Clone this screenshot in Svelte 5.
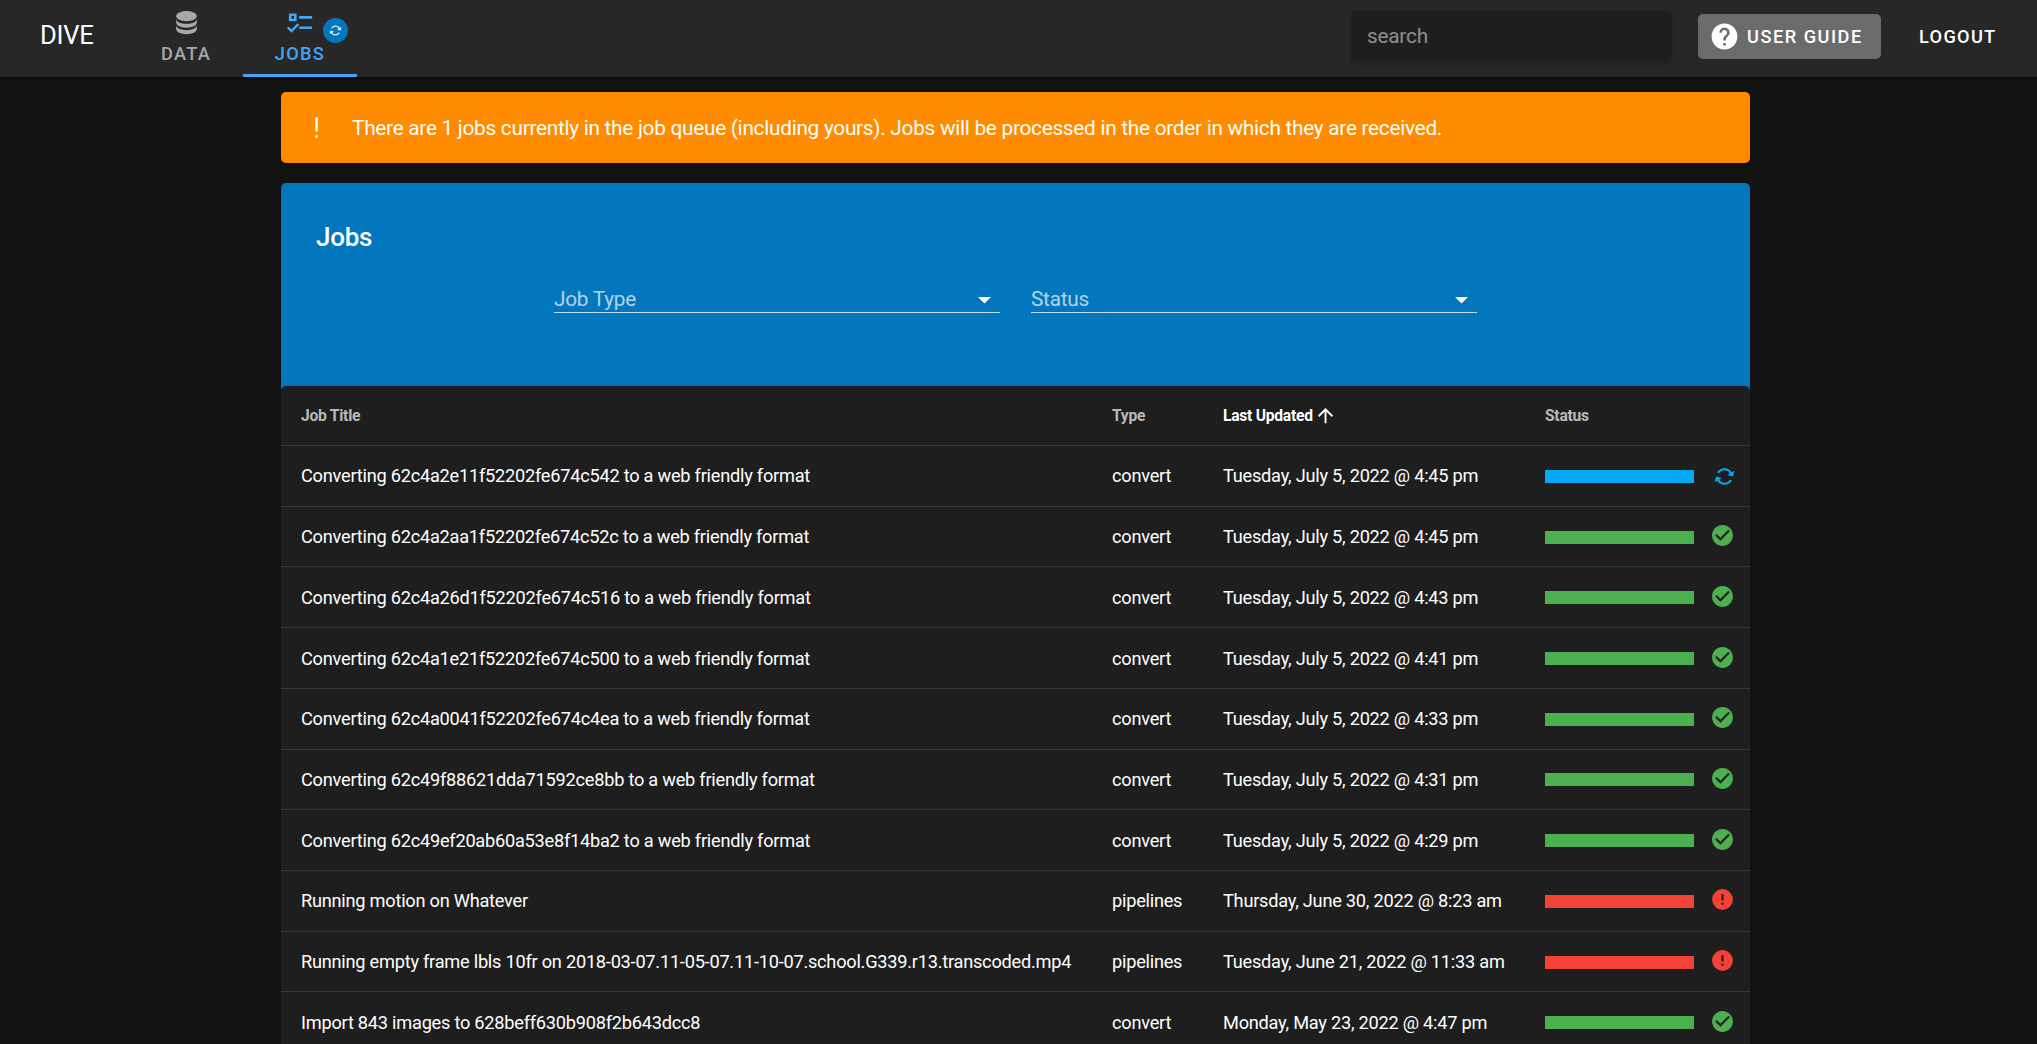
<script>
  const icons = {
    database: 'M12,3C7.58,3 4,4.79 4,7C4,9.21 7.58,11 12,11C16.42,11 20,9.21 20,7C20,4.79 16.42,3 12,3M4,9V12C4,14.21 7.58,16 12,16C16.42,16 20,14.21 20,12V9C20,11.21 16.42,13 12,13C7.58,13 4,11.21 4,9M4,14V17C4,19.21 7.58,21 12,21C16.42,21 20,19.21 20,17V14C20,16.21 16.42,18 12,18C7.58,18 4,16.21 4,14Z',
    checks: 'M3,5H9V11H3V5M5,7V9H7V7H5M11,7H21V9H11V7M11,15H21V17H11V15M5,20L1.5,16.5L2.91,15.09L5,17.17L9.59,12.59L11,14L5,20Z',
    renew: 'M12,6V9L16,5L12,1V4A8,8 0 0,0 4,12C4,13.57 4.46,15.03 5.24,16.26L6.7,14.8C6.25,13.97 6,13 6,12A6,6 0 0,1 12,6M18.76,7.74L17.3,9.2C17.74,10.04 18,11 18,12A6,6 0 0,1 12,18V15L8,19L12,23V20A8,8 0 0,0 20,12C20,10.43 19.54,8.97 18.76,7.74Z',
    done: 'M12 2C6.5 2 2 6.5 2 12S6.5 22 12 22 22 17.5 22 12 17.5 2 12 2M10 17L5 12L6.41 10.59L10 14.17L17.59 6.58L19 8L10 17Z',
    error: 'M13,13H11V7H13M13,17H11V15H13M12,2A10,10 0 0,0 2,12A10,10 0 0,0 12,22A10,10 0 0,0 22,12A10,10 0 0,0 12,2Z',
    help: 'M15.07,11.25L14.17,12.17C13.45,12.89 13,13.5 13,15H11V14.5C11,13.39 11.45,12.39 12.17,11.67L13.41,10.41C13.78,10.05 14,9.55 14,9C14,7.89 13.1,7 12,7A2,2 0 0,0 10,9H8A4,4 0 0,1 12,5A4,4 0 0,1 16,9C16,9.88 15.64,10.67 15.07,11.25M13,19H11V17H13M12,2A10,10 0 0,0 2,12C2,17.53 6.47,22 12,22C17.53,22 22,17.53 22,12C22,6.47 17.5,2 12,2Z',
    bang: 'M11,4L13,4L13,15L11,15L11,4ZM13,18L13,20L11,20L11,18L13,18Z',
    up: 'M13,20H11V8L5.5,13.5L4.08,12.08L12,4.16L19.92,12.08L18.5,13.5L13,8V20Z',
    down: 'M7,10L12,15L17,10H7Z'
  };
  const rows = [
    ['Converting 62c4a2e11f52202fe674c542 to a web friendly format', 'convert', 'Tuesday, July 5, 2022 @ 4:45 pm', 'running'],
    ['Converting 62c4a2aa1f52202fe674c52c to a web friendly format', 'convert', 'Tuesday, July 5, 2022 @ 4:45 pm', 'done'],
    ['Converting 62c4a26d1f52202fe674c516 to a web friendly format', 'convert', 'Tuesday, July 5, 2022 @ 4:43 pm', 'done'],
    ['Converting 62c4a1e21f52202fe674c500 to a web friendly format', 'convert', 'Tuesday, July 5, 2022 @ 4:41 pm', 'done'],
    ['Converting 62c4a0041f52202fe674c4ea to a web friendly format', 'convert', 'Tuesday, July 5, 2022 @ 4:33 pm', 'done'],
    ['Converting 62c49f88621dda71592ce8bb to a web friendly format', 'convert', 'Tuesday, July 5, 2022 @ 4:31 pm', 'done'],
    ['Converting 62c49ef20ab60a53e8f14ba2 to a web friendly format', 'convert', 'Tuesday, July 5, 2022 @ 4:29 pm', 'done'],
    ['Running motion on Whatever', 'pipelines', 'Thursday, June 30, 2022 @ 8:23 am', 'error'],
    ['Running empty frame lbls 10fr on 2018-03-07.11-05-07.11-10-07.school.G339.r13.transcoded.mp4', 'pipelines', 'Tuesday, June 21, 2022 @ 11:33 am', 'error'],
    ['Import 843 images to 628beff630b908f2b643dcc8', 'convert', 'Monday, May 23, 2022 @ 4:47 pm', 'done']
  ];
  const statusIcon = { running: icons.renew, done: icons.done, error: icons.error };
</script>

<header class="bar">
  <div class="title">DIVE</div>
  <nav class="tabs">
    <div class="tab">
      <svg class="tab-icon" viewBox="0 0 24 24"><path d={icons.database} /></svg>
      <span>DATA</span>
    </div>
    <div class="tab active">
      <svg class="tab-icon" viewBox="0 0 24 24"><path d={icons.checks} /></svg>
      <span>JOBS</span>
      <div class="badge"><svg viewBox="0 0 24 24"><path d={icons.renew} /></svg></div>
    </div>
  </nav>
  <div class="search">search</div>
  <div class="guide">
    <svg viewBox="0 0 24 24"><path d={icons.help} /></svg>
    <span>USER GUIDE</span>
  </div>
  <div class="logout">LOGOUT</div>
</header>

<main class="page">
  <div class="alert">
    <svg viewBox="0 0 24 24"><path d={icons.bang} /></svg>
    <span>There are 1 jobs currently in the job queue (including yours). Jobs will be processed in the order in which they are received.</span>
  </div>

  <section class="card">
    <h2>Jobs</h2>
    <div class="filters">
      <div class="select">
        <span>Job Type</span>
        <svg viewBox="0 0 24 24"><path d={icons.down} /></svg>
      </div>
      <div class="select">
        <span>Status</span>
        <svg viewBox="0 0 24 24"><path d={icons.down} /></svg>
      </div>
    </div>

    <div class="table">
      <div class="row head">
        <div>Job Title</div>
        <div>Type</div>
        <div class="sorted">Last Updated <svg viewBox="0 0 24 24"><path d={icons.up} /></svg></div>
        <div>Status</div>
      </div>
      {#each rows as r}
        <div class="row">
          <div>{r[0]}</div>
          <div>{r[1]}</div>
          <div>{r[2]}</div>
          <div class="status {r[3]}">
            <div class="progress"></div>
            <svg viewBox="0 0 24 24"><path d={statusIcon[r[3]]} /></svg>
          </div>
        </div>
      {/each}
    </div>
  </section>
</main>

<style>
  :global(body) {
    margin: 0;
    background: #121212;
    color: #fff;
    font-family: Roboto, sans-serif;
    letter-spacing: -0.015em;
    overflow: hidden;
    height: 1044px;
  }
  svg { display: block; fill: currentColor; flex: none; }

  .bar {
    height: 77px;
    background: #272727;
    display: flex;
    align-items: center;
    padding: 0 40.5px 4px 40px;
    box-sizing: border-box;
    position: relative;
    box-shadow: 0 2px 5px rgba(0,0,0,.3);
  }
  .title { font-size: 25.6px; width: 89px; margin-bottom: 3px; }
  .tabs { display: flex; height: 77px; margin-right: auto; align-self: flex-start; }
  .tab {
    width: 114px;
    height: 77px;
    box-sizing: border-box;
    padding-top: 7px;
    display: flex;
    flex-direction: column;
    align-items: center;
    position: relative;
    color: rgba(255,255,255,.6);
    font-size: 18.2px;
    font-weight: 500;
    letter-spacing: 1.3px;
    line-height: 22px;
  }
  .tab-icon { width: 31px; height: 31px; margin-bottom: 5px; }
  .tab.active { color: #42a5f5; border-bottom: 3px solid #42a5f5; }
  .badge {
    position: absolute;
    left: 80px;
    top: 18px;
    width: 25px;
    height: 25px;
    border-radius: 50%;
    background: #0277bd;
    color: #fff;
    display: flex;
    align-items: center;
    justify-content: center;
  }
  .badge svg { width: 15px; height: 15px; transform: rotate(60deg); }

  .search {
    width: 321px;
    height: 51px;
    box-sizing: border-box;
    padding-left: 16px;
    line-height: 50px;
    background: #1e1e1e;
    border-radius: 5px;
    color: rgba(255,255,255,.5);
    font-size: 20.8px;
    box-shadow: 0 2px 3px rgba(0,0,0,.2);
    margin-right: 26px;
  }
  .guide {
    width: 183px;
    height: 45px;
    background: #6b6b6b;
    border-radius: 5px;
    display: flex;
    align-items: center;
    gap: 7px;
    padding-left: 11px;
    box-sizing: border-box;
    font-size: 18.2px;
    font-weight: 500;
    letter-spacing: 1.5px;
  }
  .guide svg { width: 31px; height: 31px; }
  .logout {
    margin-left: 38px;
    font-size: 18.2px;
    font-weight: 500;
    letter-spacing: 1.3px;
  }

  .page { padding: 15px 287px 0 281px; }
  .alert {
    height: 71px;
    background: #ff8c00;
    border-radius: 5px;
    display: flex;
    align-items: center;
    padding-left: 20px;
    font-size: 20.8px;
    letter-spacing: -0.0133em;
    box-sizing: border-box;
  }
  .alert svg { width: 31px; height: 31px; margin-right: 20px; }

  .card {
    margin-top: 20px;
    background: #0277bd;
    border-radius: 5px;
  }
  h2 {
    margin: 0;
    padding: 36px 0 0 35px;
    font-size: 26px;
    font-weight: 500;
    line-height: 36px;
  }
  .filters {
    display: flex;
    gap: 31px;
    padding: 16px 0 73px 273px;
  }
  .select {
    width: 446px;
    height: 42px;
    box-sizing: border-box;
    display: flex;
    align-items: center;
    justify-content: space-between;
    border-bottom: 1.5px solid rgba(255,255,255,.75);
    font-size: 20.8px;
    color: rgba(255,255,255,.7);
    padding: 15.5px 0 0;
  }
  .select svg { width: 31px; height: 31px; color: #fff; }

  .table {
    background: #1e1e1e;
    border-radius: 5px;
  }
  .row {
    display: grid;
    grid-template-columns: 811px 111px 322px 1fr;
    height: 60.72px;
    box-sizing: border-box;
    align-items: center;
    border-bottom: 1px solid rgba(255,255,255,.12);
    font-size: 18.2px;
  }
  .row > div { padding-left: 20px; white-space: nowrap; }
  .row.head {
    height: 60px;
    font-size: 15.6px;
    font-weight: 700;
    color: rgba(255,255,255,.7);
  }
  .row.head .sorted { color: #fff; display: flex; align-items: center; gap: 1px; }
  .sorted svg { width: 23px; height: 23px; }

  .status { display: flex; align-items: center; padding-top: 1px; }
  .progress { width: 149px; height: 13px; margin-right: 16px; background: currentColor; }
  .status svg { width: 25px; height: 25px; margin-bottom: 3px; }
  .status.running svg { margin: 0 0 0 1.5px; transform: rotate(60deg); }
  .running { color: #03a9f4; }
  .done { color: #4caf50; }
  .error { color: #f44336; }
</style>
